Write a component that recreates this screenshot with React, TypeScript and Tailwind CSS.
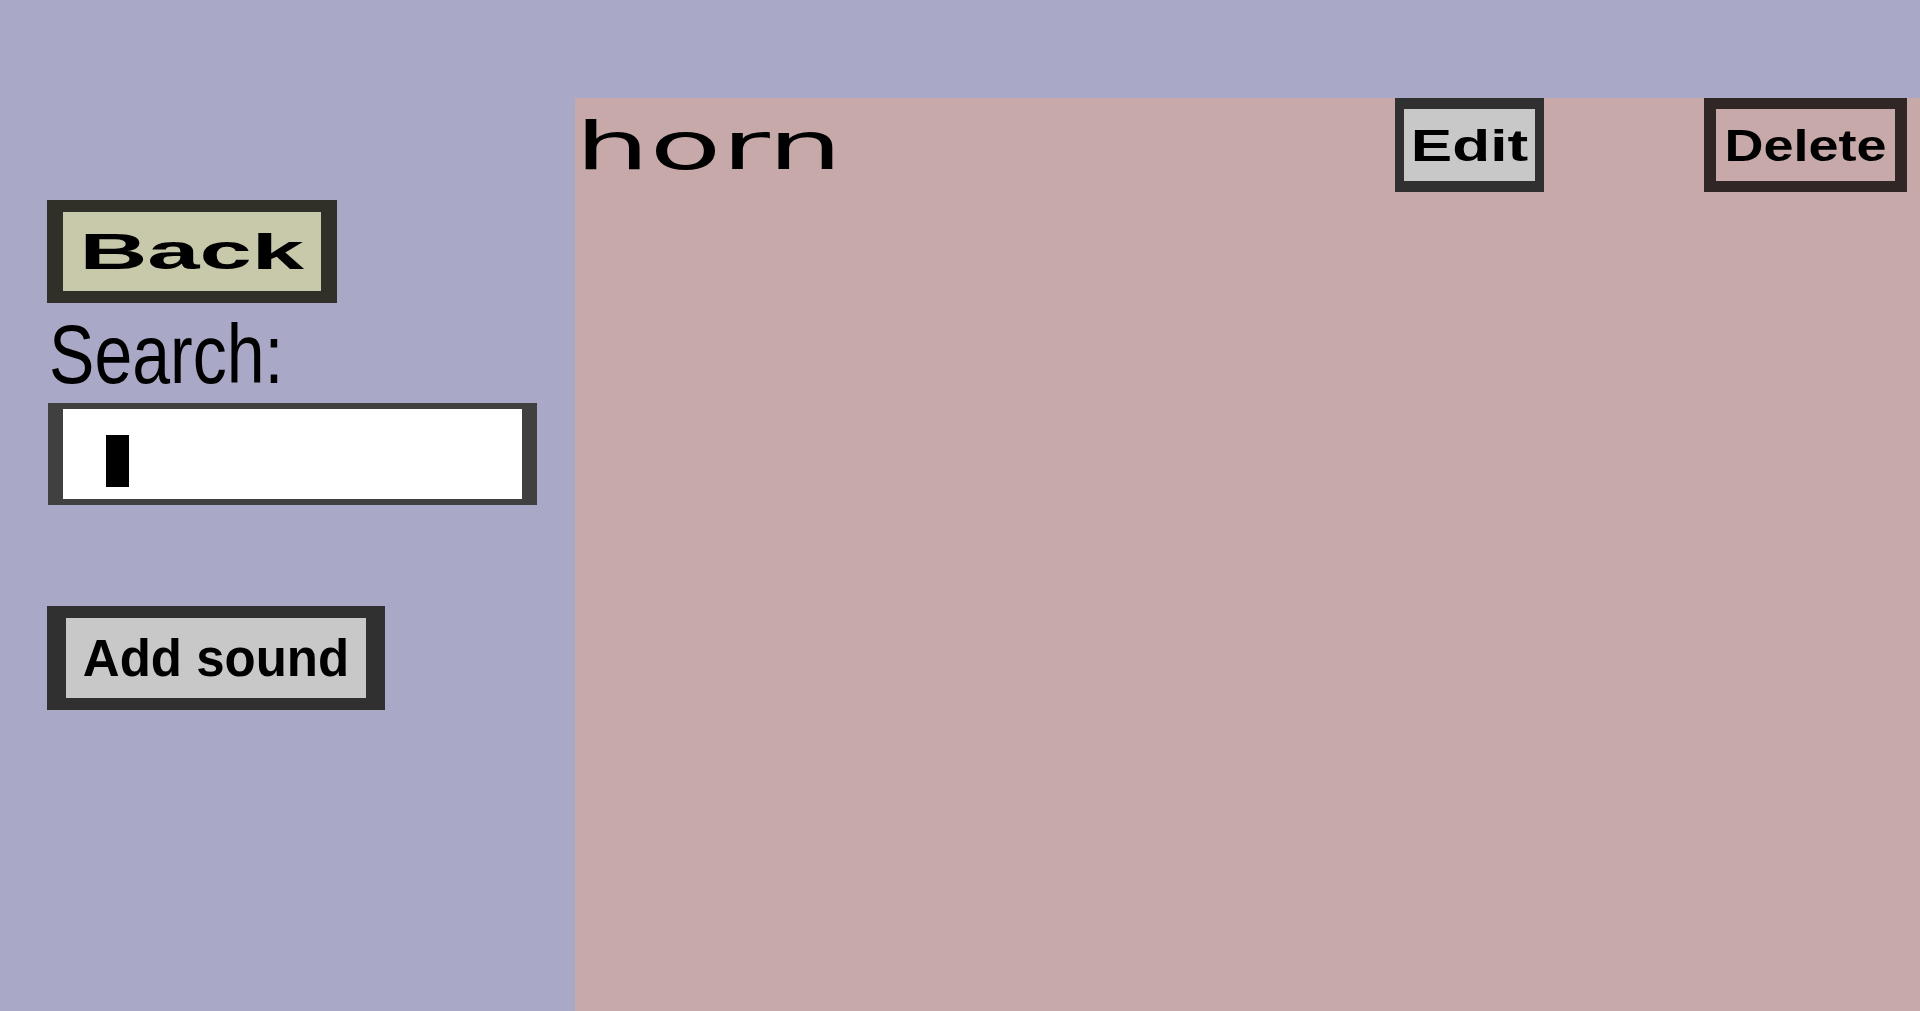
import React from "react";

export default function App() {
  return (
    <div className="flex h-screen w-full bg-[#a9a9c7] overflow-hidden">
      <div className="w-[575px] shrink-0 flex flex-col items-start pl-[47px] pt-[200px]">
        <button className="w-[290px] h-[103px] border-x-[16px] border-y-[12px] border-[#303028] bg-[#c8c9ab] flex items-center justify-center">
          <span className="inline-block font-['Liberation_Sans',Arial,sans-serif] font-bold text-[50px] leading-none text-black scale-x-[1.88]">
            Back
          </span>
        </button>
        <div className="mt-[9px] ml-[2px] h-[84px] font-['Liberation_Sans',Arial,sans-serif] text-[84px] leading-none text-black origin-left scale-x-[0.81] whitespace-nowrap">
          Search:
        </div>
        <div className="mt-[7px] ml-px w-[489px] h-[102px] border-x-[15px] border-y-[6px] border-[#404040] bg-white pl-[43px] pt-[26px]">
          <div className="w-[23px] h-[52px] bg-black" />
        </div>
        <button className="mt-[101px] w-[338px] h-[104px] border-x-[19px] border-y-[12px] border-[#303030] bg-[#c8c8c8] flex items-center justify-center">
          <span className="inline-block font-['Liberation_Sans',Arial,sans-serif] font-bold text-[51px] leading-none text-black whitespace-nowrap">
            Add sound
          </span>
        </button>
      </div>
      <div className="flex-1 mt-[98px] bg-[#c7a9aa] flex items-start">
        <div className="mt-[16px] font-['DejaVu_Sans',sans-serif] text-[65px] leading-none text-black origin-left scale-x-[1.81] whitespace-nowrap">
          horn
        </div>
        <button className="ml-auto w-[149px] h-[94px] border-x-[9px] border-y-[11px] border-[#303030] bg-[#c8c8c8] flex items-center justify-center">
          <span className="inline-block font-['Liberation_Sans',Arial,sans-serif] font-bold text-[45px] leading-none text-black scale-x-[1.38]">
            Edit
          </span>
        </button>
        <button className="ml-[160px] mr-[13px] w-[203px] h-[94px] border-x-[12px] border-y-[11px] border-[#302626] bg-transparent flex items-center justify-center">
          <span className="inline-block font-['Liberation_Sans',Arial,sans-serif] font-bold text-[45px] leading-none text-black scale-x-[1.2]">
            Delete
          </span>
        </button>
      </div>
    </div>
  );
}
